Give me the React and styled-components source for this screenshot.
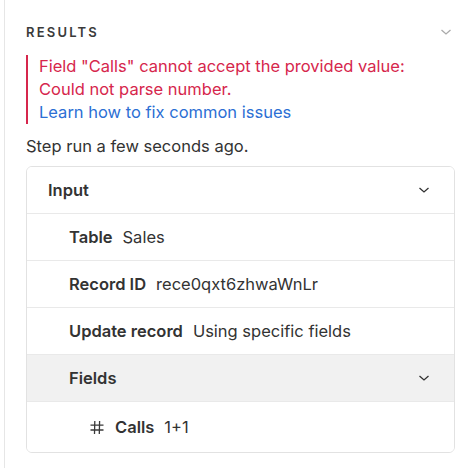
import React from 'react';
import styled, { createGlobalStyle } from 'styled-components';

const GlobalStyle = createGlobalStyle`
    body {
        margin: 0;
        background: #fff;
        font-family: Inter, "Liberation Sans", Arial, sans-serif;
        color: #333;
    }
`;

const Panel = styled.div`
    width: 469px;
    height: 468px;
    margin-left: 4px;
    border-left: 1px solid #e6e6e6;
    box-sizing: border-box;
    padding: 21px 21px 0 21px;
`;

const Header = styled.div`
    display: flex;
    align-items: center;
    justify-content: space-between;
    height: 22px;
    h4 {
        margin: 0;
        font-size: 13px;
        font-weight: 600;
        letter-spacing: 2.2px;
        color: #3a3a3a;
    }
`;

const Chevron = styled.svg`
    width: 12px;
    height: 8px;
    margin-right: ${props => props.$right || 0}px;
    stroke: ${props => props.$color || '#333'};
    fill: none;
    stroke-width: 1.3;
`;

const ErrorBox = styled.div`
    margin-top: 12px;
    border-left: 2px solid #d6264c;
    padding-left: 11px;
    font-size: 16.5px;
    line-height: 23px;
    color: #d6264c;
    a {
        color: #2c6fd4;
        text-decoration: none;
    }
`;

const Note = styled.p`
    margin: 11px 0 8px 0;
    font-size: 16.5px;
    line-height: 23px;
`;

const Card = styled.div`
    width: 427px;
    border: 1px solid #e2e2e2;
    border-radius: 6px;
    overflow: hidden;
`;

const Row = styled.div`
    display: flex;
    align-items: center;
    justify-content: space-between;
    height: ${props => props.$tall ? 50 : 46}px;
    padding-left: ${props => props.$indent}px;
    background: ${props => props.$shade ? '#f1f1f1' : '#fff'};
    font-size: 16.5px;
    & + & {
        border-top: 1px solid #e9e9e9;
    }
`;

const Pair = styled.div`
    display: flex;
    align-items: center;
    gap: 10px;
    b {
        font-weight: 600;
        color: #333;
    }
`;

const Hash = styled.svg`
    width: 14px;
    height: 15px;
    margin-right: 1px;
    stroke: #3a3a3a;
    stroke-width: 1.3;
    fill: none;
`;

function Down({right, color}) {
    return (
        <Chevron viewBox="0 0 12 8" $right={right} $color={color}>
            <path d="M1.5 2 L6 6 L10.5 2" />
        </Chevron>
    );
}

export default function App() {
    return (
        <>
            <GlobalStyle />
            <Panel>
                <Header>
                    <h4>RESULTS</h4>
                    <Down right={0} color="#aaa" />
                </Header>
                <ErrorBox>
                    Field "Calls" cannot accept the provided value:<br />
                    Could not parse number.<br />
                    <a href="#fix">Learn how to fix common issues</a>
                </ErrorBox>
                <Note>Step run a few seconds ago.</Note>
                <Card>
                    <Row $indent={21}>
                        <Pair><b>Input</b></Pair>
                        <Down right={24} />
                    </Row>
                    <Row $indent={42}>
                        <Pair><b>Table</b><span>Sales</span></Pair>
                    </Row>
                    <Row $indent={42}>
                        <Pair><b>Record ID</b><span>rece0qxt6zhwaWnLr</span></Pair>
                    </Row>
                    <Row $indent={42}>
                        <Pair><b>Update record</b><span>Using specific fields</span></Pair>
                    </Row>
                    <Row $indent={42} $shade>
                        <Pair><b>Fields</b></Pair>
                        <Down right={24} />
                    </Row>
                    <Row $indent={63} $tall>
                        <Pair>
                            <Hash viewBox="0 0 14 15">
                                <path d="M4.8 1 L4.5 14 M9.6 1 L9.3 14 M0.5 5.2 H13.5 M0.5 10 H13.5" />
                            </Hash>
                            <b>Calls</b><span>1+1</span>
                        </Pair>
                    </Row>
                </Card>
            </Panel>
        </>
    );
}
